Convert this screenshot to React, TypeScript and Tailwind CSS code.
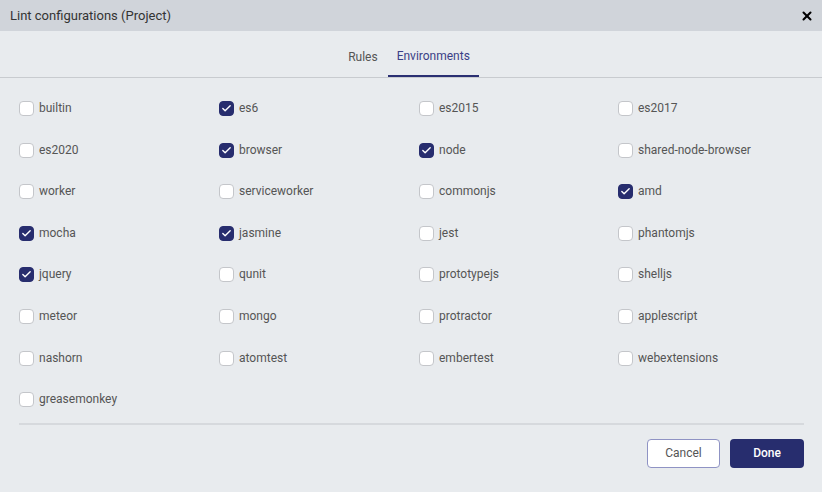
import { Check, X } from "lucide-react";
import { useState } from "react";

const envs: [string, boolean][] = [
  ["builtin", false], ["es6", true], ["es2015", false], ["es2017", false],
  ["es2020", false], ["browser", true], ["node", true], ["shared-node-browser", false],
  ["worker", false], ["serviceworker", false], ["commonjs", false], ["amd", true],
  ["mocha", true], ["jasmine", true], ["jest", false], ["phantomjs", false],
  ["jquery", true], ["qunit", false], ["prototypejs", false], ["shelljs", false],
  ["meteor", false], ["mongo", false], ["protractor", false], ["applescript", false],
  ["nashorn", false], ["atomtest", false], ["embertest", false], ["webextensions", false],
  ["greasemonkey", false],
];

export default function App() {
  const [checked, setChecked] = useState<Record<string, boolean>>(
    Object.fromEntries(envs)
  );

  return (
    <div className="h-[492px] w-[822px] bg-[#e8ebee] font-['Roboto',sans-serif] text-[#444]">
      <div className="flex h-[31px] items-center justify-between bg-[#d0d4da] pl-[10px] pr-[8px]">
        <span className="text-[13px] text-[#333]">Lint configurations (Project)</span>
        <X className="h-[14px] w-[14px] text-black" strokeWidth={3.5} />
      </div>

      <div className="flex justify-center border-b border-[#c8cbcf] pt-[16px]">
        <div className="mr-[5px] flex text-[12px]">
          <button className="px-[10px] pb-[11px] text-[#555]">Rules</button>
          <button className="border-b-2 border-[#2a2f72] px-[9px] pb-[10px] text-[#3b3f86]">Environments</button>
        </div>
      </div>

      <div className="pl-[19px] pr-[18px]">
        <div className="grid grid-cols-[200px_200px_199px_1fr] pt-[22px]">
          {envs.map(([name]) => (
            <label key={name} className="flex h-[41.6px] cursor-pointer items-start gap-[5px] text-[12px] text-[#555]">
              <span
                onClick={() => setChecked({ ...checked, [name]: !checked[name] })}
                className={`mt-px flex h-[15px] w-[15px] items-center justify-center rounded-[4px] border ${
                  checked[name] ? "border-[#272d6e] bg-[#272d6e]" : "border-[#c4c6ca] bg-white"
                }`}
              >
                {checked[name] && <Check className="h-[11px] w-[11px] text-white" strokeWidth={3} />}
              </span>
              <span className="leading-[17px]">{name}</span>
            </label>
          ))}
        </div>
        <div className="mt-[-10px] border-t-2 border-[#d6d9dd]" />
        <div className="flex justify-end gap-[10px] pt-[14px]">
          <button className="h-[29px] w-[73px] rounded-[4px] border border-[#8f93c4] bg-white text-[12px] text-[#555]">Cancel</button>
          <button className="h-[29px] w-[74px] rounded-[4px] bg-[#272d6e] text-[12px] font-medium text-white">Done</button>
        </div>
      </div>
    </div>
  );
}
